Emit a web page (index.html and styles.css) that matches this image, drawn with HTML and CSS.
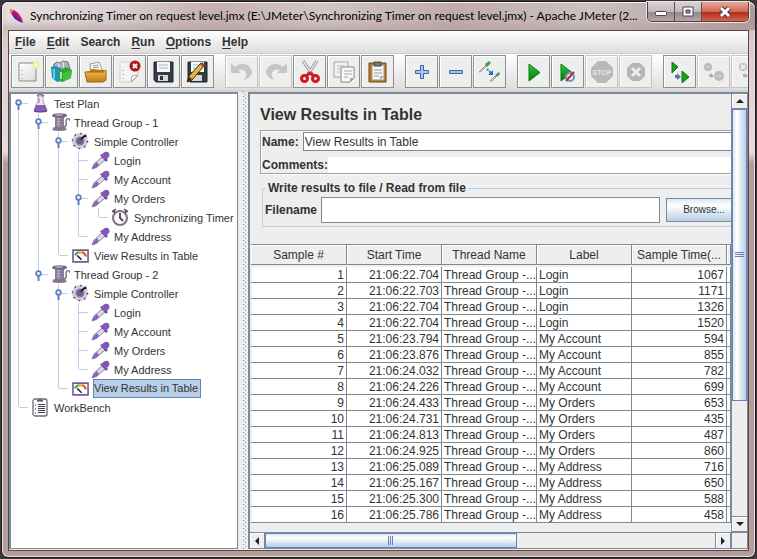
FILE: index.html
```html
<!DOCTYPE html>
<html lang="en">
<head>
<meta charset="utf-8">
<title>Synchronizing Timer on request level.jmx - Apache JMeter</title>
<link rel="stylesheet" href="styles.css">
</head>
<body>
<svg class="defs" aria-hidden="true">
  <defs>
    <linearGradient id="gGreen" x1="0" y1="0" x2="0" y2="1"><stop offset="0" stop-color="#3fc04c"/><stop offset=".5" stop-color="#18a01c"/><stop offset="1" stop-color="#067a0a"/></linearGradient>
    <linearGradient id="gFolder" x1="0" y1="0" x2="0" y2="1"><stop offset="0" stop-color="#f0c050"/><stop offset="1" stop-color="#c07f10"/></linearGradient>
    <linearGradient id="gPaper" x1="0" y1="0" x2="1" y2="1"><stop offset="0" stop-color="#ffffff"/><stop offset="1" stop-color="#dcdcdc"/></linearGradient>
  </defs>
  <symbol id="i-flask" viewBox="0 0 19 19"><path d="M7 2h5v5l4 9q0 2-2 2H5q-2 0-2-2l4-9z" fill="#eceaf0" stroke="#a49eae"/><path d="M5 11h9l2 5q0 2-2 2H5q-2 0-2-2z" fill="#8560b2"/><path d="M6 2l3-2 4 2" stroke="#77717f" stroke-width="1.500" fill="none"/><path d="M8 4v5" stroke="#8b8593"/><path d="M3 17q6 2 13 0" stroke="#5c3c8c" fill="none"/></symbol>
  <symbol id="i-spool" viewBox="0 0 19 19"><path d="M4 3h9v12H4z" fill="#8e809c"/><path d="M6 3h3v12H6z" fill="#b8aec4"/><path d="M4 7h9M4 10h9M4 13h9" stroke="#857894"/><ellipse cx="8.500" cy="2.500" rx="7.500" ry="2.300" fill="#74687f"/><ellipse cx="8" cy="2" rx="4" ry="1" fill="#a9a0b3"/><path d="M3 14h11l2 3q-8 2-15 0z" fill="#83778f"/><path d="M13 14q3-1 2-5q0-4 3-3q1 0 1 2" fill="none" stroke="#83778f" stroke-width="1.500"/></symbol>
  <symbol id="i-dial" viewBox="0 0 19 19"><circle cx="9" cy="9" r="8" fill="#d3cadf"/><circle cx="9" cy="9" r="7.500" fill="none" stroke="#332d39" stroke-width="1.500" stroke-dasharray="1.300 4.590"/><circle cx="9" cy="9" r="4.500" fill="#907fa6"/><circle cx="9" cy="9" r="3" fill="#6b5a83"/><path d="M10 7l5-4" stroke="#17131c" stroke-width="1.800"/></symbol>
  <symbol id="i-dropper" viewBox="0 0 19 19"><path d="M1 18l2-5 8-7 3 3-8 7z" fill="#ded8e8" stroke="#8d829b"/><path d="M1 18l2-4 3-3 2 3-3 3z" fill="#8a63bd"/><path d="M9 4l2-1 6 6-2 2z" fill="#705396"/><path d="M11 4q2-4 6-3q3 3 0 6l-3 2-4-4z" fill="#8258b4"/></symbol>
  <symbol id="i-clock" viewBox="0 0 19 19"><circle cx="9" cy="10" r="7" fill="#fafafa" stroke="#7d7289" stroke-width="2"/><path d="M9 5v5l3 3" fill="none" stroke="#4a4255" stroke-width="1.800"/><path d="M1 4l4-3M17 4l-4-3M2 2l2 3M16 2l-2 3" stroke="#4d4556" stroke-width="1.500"/></symbol>
  <symbol id="i-gauge" viewBox="0 0 16 13"><path d="M1 1h14v11H1z" fill="#fff" stroke="#735d98" stroke-width="1.500"/><path d="M3 6q1-3 4-3" fill="none" stroke="#2fa66a" stroke-width="2"/><path d="M9 3q3 0 4 4" fill="none" stroke="#e0552e" stroke-width="2"/><path d="M6 3.500q2-1 4 0" fill="none" stroke="#eda43a" stroke-width="2"/><path d="M9 10L5 6" stroke="#222" stroke-width="1.500"/></symbol>
  <symbol id="i-bench" viewBox="0 0 19 19"><rect x="2" y="1" width="14" height="17" rx="2" fill="#fafafa" stroke="#73687f" stroke-width="1.300"/><path d="M6 3q3-3 6 0z" fill="#555" stroke="#555"/><path d="M7 6.500h7M7 8.500h7M7 10.500h7M7 12.500h7M7 14.500h7" stroke="#44404a"/><path d="M4 7h1M4 11h1M4 15h1" stroke="#5cc05c" stroke-width="2"/></symbol>
  <symbol id="i-handle" viewBox="0 0 7 11"><path d="M3.500 5v6" stroke="#5b7fc0" stroke-width="2"/><circle cx="3.500" cy="3.500" r="2.300" fill="#fff" stroke="#5b7fc0" stroke-width="1.800"/></symbol>
</svg>

<div class="window">
  <header class="titlebar">
    <svg class="feather" viewBox="0 0 18 18" aria-hidden="true"><path d="M1 1q6 0 10 5q4 5 5 10q-5-1-9-5Q2 7 1 1z" fill="#b3126f"/><path d="M3 5q6 4 12 11q-6-2-9-5z" fill="#4b2a9c"/><path d="M1 1l4 1-2 3z" fill="#e9a23c"/><path d="M7 4q4 3 6 8" stroke="#e2224e" fill="none"/></svg>
    <h1 class="title">Synchronizing Timer on request level.jmx (E:\JMeter\Synchronizing Timer on request level.jmx) - Apache JMeter (2...</h1>
    <div class="controls">
      <button class="ctl" aria-label="Minimize"><svg viewBox="0 0 14 12"><rect x="1.500" y="5.500" width="11" height="4" rx="1" fill="#fff" stroke="#4d4650"/></svg></button>
      <button class="ctl" aria-label="Maximize"><svg viewBox="0 0 14 12"><path d="M2 1h10v9H2z" fill="#fff" stroke="#4d4650"/><path d="M5 4h4v3H5z" fill="#8d8189" stroke="#4d4650"/></svg></button>
      <button class="ctl close" aria-label="Close"><svg viewBox="0 0 14 12"><path d="M3 2l8 8M11 2l-8 8" stroke="#54343a" stroke-width="5"/><path d="M3 2l8 8M11 2l-8 8" stroke="#fff" stroke-width="3"/></svg></button>
    </div>
  </header>

  <div class="client">
    <nav class="menubar">
      <button><u>F</u>ile</button><button><u>E</u>dit</button><button>Search</button><button><u>R</u>un</button><button><u>O</u>ptions</button><button><u>H</u>elp</button>
    </nav>

    <div class="toolbar" role="toolbar">
      <div class="group">
        <button aria-label="New"><svg viewBox="0 0 24 24"><path d="M3 3h17v18H3z" fill="url(#gPaper)" stroke="#8a8a8a"/><path d="M6 10v1M6 14v1M6 18v1" stroke="#888"/><circle cx="20" cy="5" r="3.500" fill="#f8ee9a"/><circle cx="20" cy="5" r="1.500" fill="#fffde0"/></svg></button>
        <button aria-label="Templates"><svg viewBox="0 0 24 24"><path d="M4 4l3-2 3 1 3-2 5 1 2 7H3z" fill="#a9b4b8" stroke="#6b777c"/><path d="M8 3l2 6M13 2l1 7" stroke="#e9eef0"/><path d="M1 7l4-1 6 2v13l-4 1-5-4z" fill="#1697b8"/><path d="M4 9v10" stroke="#8fdcec" stroke-width="1.500"/><path d="M9 11l7-4 6 3-1 8-9 4-3-2z" fill="#2aa52e"/><path d="M13 13l8-3v8l-8 4z" fill="#46c03c"/><path d="M11 12v7" stroke="#d8f5d4" stroke-width="1.500"/></svg></button>
        <button aria-label="Open"><svg viewBox="0 0 24 24"><path d="M6 4l9-2 3 7v6H7z" fill="#f7f7f7" stroke="#999"/><path d="M9 6l5-1M9 8l6-1" stroke="#999"/><path d="M2 12l4-1 1-2 13 1v11H3z" fill="#b97c15"/><path d="M1 12h18l3-2v10l-3 2H3z" fill="url(#gFolder)" stroke="#9b6712"/></svg></button>
        <button aria-label="Close test plan"><svg viewBox="0 0 24 24"><path d="M2 2h18v14l-6 6H2z" fill="#f4f4f4" stroke="#d2d2d2"/><path d="M13 22l1-6 6-1z" fill="#fff" stroke="#aaa"/><path d="M5 10v1M5 14v1M5 18v1" stroke="#888"/><circle cx="17" cy="6" r="5.500" fill="#ad1719"/><path d="M15 4l4 4M19 4l-4 4" stroke="#fff" stroke-width="2"/></svg></button>
        <button aria-label="Save"><svg viewBox="0 0 24 24"><path d="M2 2h19v20H4l-2-2z" fill="#353b43" stroke="#22262b"/><path d="M5 2h13v10H5z" fill="#f3f6fa"/><path d="M7 5h9M7 8h9" stroke="#a4b4c8"/><path d="M6 15h10v6H6z" fill="#d7d7d7"/><path d="M8 16h3v4H8z" fill="#333"/></svg></button>
        <button aria-label="Save as"><svg viewBox="0 0 24 24"><path d="M2 2h19v20H4l-2-2z" fill="#353b43" stroke="#22262b"/><path d="M5 2h13v10H5z" fill="#f3f6fa"/><path d="M7 5h9M7 8h9" stroke="#a4b4c8"/><path d="M6 15h10v6H6z" fill="#d7d7d7"/><path d="M1 22l2-6L15 3l3 3L6 20z" fill="#e6b23a" stroke="#3f3014"/><path d="M1 22l2-5 3 2z" fill="#2a2118"/><path d="M14 4l2-2 3 3-2 2z" fill="#b3342c"/></svg></button>
      </div>
      <div class="group">
        <button disabled aria-label="Undo"><svg viewBox="0 0 24 24"><path d="M1 3v10h10L8 10q6-2 8 3q1 3-2 7q8-3 8-8Q20 3 11 4q-4 1-6 3z" fill="#c6c6c6"/></svg></button>
        <button disabled aria-label="Redo"><svg viewBox="0 0 24 24"><path d="M23 3v10H13l3-3q-6-2-8 3q-1 3 2 7q-8-3-8-8Q4 3 13 4q4 1 6 3z" fill="#c6c6c6"/></svg></button>
        <button aria-label="Cut"><svg viewBox="0 0 24 24"><path d="M5 1l9 13M19 1l-9 13" stroke="#777" stroke-width="3"/><path d="M5 1l9 13M19 1l-9 13" stroke="#e9e9e9" stroke-width="1.500"/><circle cx="6.500" cy="18.500" r="3" fill="none" stroke="#d0191d" stroke-width="3"/><circle cx="17.500" cy="18.500" r="3" fill="none" stroke="#d0191d" stroke-width="3"/><path d="M8 16l4-3 4 3" stroke="#d0191d" stroke-width="3" fill="none"/></svg></button>
        <button aria-label="Copy"><svg viewBox="0 0 24 24"><path d="M2 2h14v15H2z" fill="#f2f2f2" stroke="#a2a2a2"/><path d="M5 6h8M5 9h3M5 12h3" stroke="#bbb"/><path d="M9 7h13v11l-4 4H9z" fill="#f8f8f8" stroke="#888"/><path d="M12 11h8M12 14h8M12 17h4" stroke="#aaa"/><path d="M18 22v-4h4z" fill="#aaa"/></svg></button>
        <button aria-label="Paste"><svg viewBox="0 0 24 24"><path d="M3 3h17v19H3z" fill="#b87923" stroke="#704814"/><path d="M6 5h12v15H6z" fill="#f7f7f7" stroke="#999"/><path d="M8 2h7v4H8z" fill="#777" stroke="#444"/><path d="M8 10h8M8 13h8M8 16h5" stroke="#999"/><path d="M14 20v-4h4z" fill="#aaa"/></svg></button>
      </div>
      <div class="group">
        <button aria-label="Expand all"><svg viewBox="0 0 24 24"><path d="M10.500 5.500h3v5h5v3h-5v5h-3v-5h-5v-3h5z" fill="#a8c4e6" stroke="#3b69a8"/></svg></button>
        <button aria-label="Collapse all"><svg viewBox="0 0 24 24"><path d="M5.500 10.500h13v3h-13z" fill="#a8c4e6" stroke="#3b69a8"/></svg></button>
        <button aria-label="Toggle"><svg viewBox="0 0 24 24"><path d="M1 12l7-7 1 1-7 6z" fill="#e0e4df" stroke="#999"/><path d="M7 4l4-3 2 2-4 4z" fill="#459c45"/><path d="M12 21l5-5 1 1-4 4z" fill="#ddd" stroke="#999"/><path d="M17 15l4-3 1 2-3 3z" fill="#459c45"/><path d="M9 9l4 4" stroke="#297ac8" stroke-width="2" stroke-dasharray="2 1"/><path d="M15 10v5h-5z" fill="#1e6ec6"/></svg></button>
      </div>
      <div class="group">
        <button aria-label="Start"><svg viewBox="0 0 24 24"><path d="M7 4l11 8.500L7 21z" fill="url(#gGreen)" stroke="#0a7a12"/></svg></button>
        <button aria-label="Start no pauses"><svg viewBox="0 0 24 24"><path d="M5 4l11 8.500L5 21z" fill="url(#gGreen)" stroke="#0a7a12"/><circle cx="14" cy="17" r="4" fill="#e8eef8" stroke="#6d93c6" stroke-width="2"/><path d="M10 21l8-9" stroke="#c3262b" stroke-width="2"/></svg></button>
        <button disabled aria-label="Stop"><svg viewBox="0 0 24 24"><path d="M8 1h8l7 7v8l-7 7H8l-7-7V8z" fill="#b9b9b9"/><text x="12" y="15" text-anchor="middle" class="stop">STOP</text></svg></button>
        <button disabled aria-label="Shutdown"><svg viewBox="0 0 24 24"><path d="M8 3h8l5 5v8l-5 5H8l-5-5V8z" fill="#b5b5b5"/><path d="M8 8l8 8M16 8l-8 8" stroke="#eee" stroke-width="3"/></svg></button>
      </div>
      <div class="group">
        <button aria-label="Remote start"><svg viewBox="0 0 24 24"><path d="M4 2l6 5-6 6zM14 11l7 6-7 6z" fill="#18a01c" stroke="#0a7a12"/><path d="M7 15h2v-2l4 4-4 3v-2H7z" fill="#5878a8"/></svg></button>
        <button disabled aria-label="Remote stop"><svg viewBox="0 0 24 24"><circle cx="6" cy="7" r="4" fill="#bcbcbc"/><circle cx="17" cy="16" r="5" fill="#bcbcbc"/><path d="M4 7h4M14 16h6" stroke="#ddd"/><path d="M7 14h2v-1l3 3-3 2v-1H7z" fill="#b0b0b0"/></svg></button>
        <button disabled aria-label="Remote shutdown"><svg viewBox="0 0 24 24"><circle cx="7" cy="7" r="4" fill="#bcbcbc"/><circle cx="18" cy="16" r="5" fill="#bcbcbc"/><path d="M5 5l4 4M9 5l-4 4" stroke="#eee" stroke-width="2"/><path d="M7 14h2v-1l3 3-3 2v-1H7z" fill="#b0b0b0"/></svg></button>
      </div>
    </div>

    <main class="split">
      <section class="treepane">
        <ul class="tree">
          <li class="open"><span class="node"><svg class="ic"><use href="#i-flask"/></svg>Test Plan</span><svg class="knob"><use href="#i-handle"/></svg>
            <ul>
              <li class="open"><span class="node"><svg class="ic"><use href="#i-spool"/></svg>Thread Group - 1</span><svg class="knob"><use href="#i-handle"/></svg>
                <ul>
                  <li class="open"><span class="node"><svg class="ic"><use href="#i-dial"/></svg>Simple Controller</span><svg class="knob"><use href="#i-handle"/></svg>
                    <ul>
                      <li><span class="node"><svg class="ic"><use href="#i-dropper"/></svg>Login</span></li>
                      <li><span class="node"><svg class="ic"><use href="#i-dropper"/></svg>My Account</span></li>
                      <li class="open"><span class="node"><svg class="ic"><use href="#i-dropper"/></svg>My Orders</span><svg class="knob"><use href="#i-handle"/></svg>
                        <ul><li><span class="node"><svg class="ic"><use href="#i-clock"/></svg>Synchronizing Timer</span></li></ul>
                      </li>
                      <li><span class="node"><svg class="ic"><use href="#i-dropper"/></svg>My Address</span></li>
                    </ul>
                  </li>
                  <li><span class="node"><svg class="ic gauge"><use href="#i-gauge"/></svg>View Results in Table</span></li>
                </ul>
              </li>
              <li class="open"><span class="node"><svg class="ic"><use href="#i-spool"/></svg>Thread Group - 2</span><svg class="knob"><use href="#i-handle"/></svg>
                <ul>
                  <li class="open"><span class="node"><svg class="ic"><use href="#i-dial"/></svg>Simple Controller</span><svg class="knob"><use href="#i-handle"/></svg>
                    <ul>
                      <li><span class="node"><svg class="ic"><use href="#i-dropper"/></svg>Login</span></li>
                      <li><span class="node"><svg class="ic"><use href="#i-dropper"/></svg>My Account</span></li>
                      <li><span class="node"><svg class="ic"><use href="#i-dropper"/></svg>My Orders</span></li>
                      <li><span class="node"><svg class="ic"><use href="#i-dropper"/></svg>My Address</span></li>
                    </ul>
                  </li>
                  <li><span class="node"><svg class="ic gauge"><use href="#i-gauge"/></svg><span class="selected">View Results in Table</span></span></li>
                </ul>
              </li>
            </ul>
          </li>
          <li><span class="node"><svg class="ic"><use href="#i-bench"/></svg>WorkBench</span></li>
        </ul>
      </section>
      <div class="divider"></div>
      <section class="detail">
        <div class="view">
          <h2>View Results in Table</h2>
          <div class="identity">
            <div class="field"><label for="name">Name:</label><input id="name" type="text" value="View Results in Table"></div>
            <div class="field comments"><label for="comments">Comments:</label><input id="comments" type="text"></div>
          </div>
          <fieldset class="file">
            <legend>Write results to file / Read from file</legend>
            <label for="filename">Filename</label><input id="filename" type="text"><button class="browse">Browse...</button>
          </fieldset>
          <table class="results">
            <thead><tr><th>Sample #</th><th>Start Time</th><th>Thread Name</th><th>Label</th><th>Sample Time(...</th><th></th></tr></thead>
            <tbody>
              <tr><td>1</td><td>21:06:22.704</td><td>Thread Group -...</td><td>Login</td><td>1067</td><td></td></tr>
              <tr><td>2</td><td>21:06:22.703</td><td>Thread Group -...</td><td>Login</td><td>1171</td><td></td></tr>
              <tr><td>3</td><td>21:06:22.704</td><td>Thread Group -...</td><td>Login</td><td>1326</td><td></td></tr>
              <tr><td>4</td><td>21:06:22.704</td><td>Thread Group -...</td><td>Login</td><td>1520</td><td></td></tr>
              <tr><td>5</td><td>21:06:23.794</td><td>Thread Group -...</td><td>My Account</td><td>594</td><td></td></tr>
              <tr><td>6</td><td>21:06:23.876</td><td>Thread Group -...</td><td>My Account</td><td>855</td><td></td></tr>
              <tr><td>7</td><td>21:06:24.032</td><td>Thread Group -...</td><td>My Account</td><td>782</td><td></td></tr>
              <tr><td>8</td><td>21:06:24.226</td><td>Thread Group -...</td><td>My Account</td><td>699</td><td></td></tr>
              <tr><td>9</td><td>21:06:24.433</td><td>Thread Group -...</td><td>My Orders</td><td>653</td><td></td></tr>
              <tr><td>10</td><td>21:06:24.731</td><td>Thread Group -...</td><td>My Orders</td><td>435</td><td></td></tr>
              <tr><td>11</td><td>21:06:24.813</td><td>Thread Group -...</td><td>My Orders</td><td>487</td><td></td></tr>
              <tr><td>12</td><td>21:06:24.925</td><td>Thread Group -...</td><td>My Orders</td><td>860</td><td></td></tr>
              <tr><td>13</td><td>21:06:25.089</td><td>Thread Group -...</td><td>My Address</td><td>716</td><td></td></tr>
              <tr><td>14</td><td>21:06:25.167</td><td>Thread Group -...</td><td>My Address</td><td>650</td><td></td></tr>
              <tr><td>15</td><td>21:06:25.300</td><td>Thread Group -...</td><td>My Address</td><td>588</td><td></td></tr>
              <tr><td>16</td><td>21:06:25.786</td><td>Thread Group -...</td><td>My Address</td><td>458</td><td></td></tr>
            </tbody>
          </table>
        </div>
        <div class="vbar">
          <button aria-label="Scroll up"><svg viewBox="0 0 10 6"><path d="M1 5l4-4 4 4z" fill="#222"/></svg></button>
          <div class="thumb"><i></i></div><div class="rest"></div>
          <button aria-label="Scroll down"><svg viewBox="0 0 10 6"><path d="M1 1l4 4 4-4z" fill="#222"/></svg></button>
        </div>
        <div class="hbar">
          <button aria-label="Scroll left"><svg viewBox="0 0 6 10"><path d="M5 1L1 5l4 4z" fill="#222"/></svg></button>
          <div class="thumb"><i></i></div><div class="rest"></div>
          <button aria-label="Scroll right"><svg viewBox="0 0 6 10"><path d="M1 1l4 4-4 4z" fill="#222"/></svg></button>
        </div>
        <div class="corner"></div>
      </section>
    </main>
  </div>
</div>
</body>
</html>
```

FILE: styles.css
```css
* { box-sizing: border-box; }
:root { --line: #7a8a99; --blue: #b8cfe5; --focus: #6382bf; --face: #eeeeee; --ink: #333333; }
html, body { height: 100%; }
body { margin: 0; padding: 1px; background: #3c3a3b; overflow: hidden; color: var(--ink); font: 12px/16px "Liberation Sans", sans-serif; }
button, input { font: inherit; color: inherit; margin: 0; padding: 0; border: 0; border-radius: 0; background: none; }
.defs { position: absolute; width: 0; height: 0; }

.window { height: 100%; display: flex; flex-direction: column; padding: 0 6px 6px; border: 1px solid #1d1a1b; border-radius: 7px; background: linear-gradient(#bda6a4, #dccbca 40px, #ead9d8 150px, #b59c98 161px, #b79d99); box-shadow: inset 0 0 0 1px #e9dfde; }
.titlebar { display: flex; align-items: flex-start; height: 28px; flex: none; margin: 0 -6px; padding-left: 7px; border-radius: 7px 7px 0 0; background: linear-gradient(90deg, #e8dfe0, #d9cfd0 15%, #c5b1b1 28%, #d2c6c6 42%, #c0acac 60%, #cdc1c1 78%, #b09898); box-shadow: inset 0 1px 0 #f4eeee, inset 1px 0 0 #f4eeee, inset 0 -6px 6px #b49d9b88; }
.feather { width: 16px; height: 17px; margin: 6px 5px 0 0; flex: none; }
.title { flex: 1; min-width: 0; margin: 6px 0 0; overflow: hidden; white-space: nowrap; font: 12px/16px Lato, sans-serif; color: #000; }
.controls { display: flex; flex: none; height: 20px; margin-right: 6px; border: 1px solid #4c4145; border-top: 0; border-radius: 0 0 5px 5px; box-shadow: 0 0 0 1px #eee3e4; overflow: hidden; }
.ctl { width: 27px; display: grid; place-items: center; border-right: 1px solid #5c5054; background: linear-gradient(#dcd3d5, #c4b8bb 50%, #95868b 52%, #b4a5a9); }
.ctl svg { width: 14px; height: 12px; }
.close { width: 46px; border-right: 0; background: linear-gradient(#e5a79c, #d36a56 50%, #b02a14 52%, #d1664c); }

.client { flex: 1; min-height: 0; display: flex; flex-direction: column; border: 1px solid #54484a; background: var(--face); }
.menubar { display: flex; gap: 11px; height: 23px; flex: none; padding: 0 6px; background: linear-gradient(#fff, #dedede); border-bottom: 1px solid #ccc; font-weight: bold; }
.menubar u { text-underline-offset: 2px; }
.toolbar { display: flex; gap: 11px; height: 38px; flex: none; padding: 1px 0 0 2px; overflow: hidden; background: linear-gradient(#fff, #dedede); border-bottom: 2px solid #d4d4d4; }
.group { display: flex; gap: 1px; flex: none; }
.toolbar button { width: 33px; height: 33px; display: grid; place-items: center; border: 1px solid #8f8f8f; background: var(--face); box-shadow: inset 1px 1px 0 #fff; }
.toolbar button:disabled { border-color: #c4c4c4; }
.toolbar svg { width: 24px; height: 24px; }
.stop { font: bold 7px "Liberation Sans", sans-serif; fill: #e6e6e6; }

.split { flex: 1; min-height: 0; display: flex; padding-bottom: 1px; }
.treepane { flex: none; width: 229px; border: 1px solid var(--line); border-width: 2px 1px 1px 2px; background: #fff; overflow: hidden; font-size: 11px; }
.tree, .tree ul { list-style: none; margin: 0; padding: 0; }
.tree { padding: 0 0 0 20px; }
.tree ul { padding-left: 20px; }
.tree li { position: relative; }
.tree li::before { content: ""; position: absolute; left: -13px; top: 0; bottom: 0; border-left: 1px solid var(--blue); }
.tree > li:first-child::before { top: 9px; }
.tree li:last-child::before { bottom: auto; height: 9px; }
.tree li::after { content: ""; position: absolute; left: -12px; top: 9px; width: 9px; border-top: 1px solid var(--blue); }
.node { display: flex; align-items: center; height: 19px; white-space: nowrap; }
.ic { width: 19px; height: 19px; margin-right: 4px; flex: none; overflow: visible; }
.gauge { height: 14px; }
.knob { position: absolute; left: -16px; top: 5px; width: 7px; height: 11px; z-index: 1; }
.selected { height: 19px; line-height: 17px; margin-left: -1px; padding-right: 2px; border: 1px solid var(--focus); background: var(--blue); }
.divider { flex: none; width: 10px; background: repeating-linear-gradient(#8a95a0 0 1px, transparent 1px 4px) 5px 0 / 1px 100% no-repeat, repeating-linear-gradient(transparent 0 2px, #8a95a0 2px 3px, transparent 3px 4px) 7px 0 / 1px 100% no-repeat, var(--face); }

.detail { flex: 1; min-width: 0; display: grid; grid-template: minmax(0, 1fr) 16px / minmax(0, 1fr) 16px; border: 1px solid var(--line); border-width: 2px 1px 1px 2px; }
.view { overflow: hidden; white-space: nowrap; }
h2 { margin: 0 0 4px 10px; padding-top: 10px; font-size: 16px; line-height: 22px; }
.identity { margin-left: 10px; height: 44px; border: 1px solid #a0a0a0; border-right: 0; padding: 1px 0 0 1px; box-shadow: inset 1px 1px 0 #fff, 0 1px 0 #fff; }
.field { display: flex; align-items: center; gap: 4px; height: 19px; }
label, legend { font-weight: bold; }
.field input { flex: 1; min-width: 0; height: 19px; padding: 0 1px; border: 1px solid var(--line); border-right: 0; background: #fff; }
.comments { height: 16px; margin-top: 6px; gap: 0; }
.comments input { height: 16px; border: 0; }
.file { display: flex; align-items: center; margin: 6px 0 17px 12px; min-width: 0; padding: 0 0 3px 2px; border: 1px solid var(--blue); border-right: 0; }
.file legend { margin-left: 1px; padding: 0 2px; line-height: 16px; }
.file input { flex: 1; min-width: 0; height: 26px; margin: 1px 6px 0 4px; border: 1px solid var(--line); background: #fff; }
.browse { width: 65px; height: 24px; padding-left: 10px; border: 1px solid var(--line); border-right: 0; background: linear-gradient(#dde8f3, #fff 30%, #b8cfe5); font: 10px/16px "Liberation Sans", sans-serif; }

.results { width: calc(100% - 1px); margin-left: 1px; table-layout: fixed; border-collapse: separate; border-spacing: 0; }
.results th { height: 21px; padding: 0; border: 1px solid var(--line); border-left: 0; font-weight: normal; box-shadow: inset 1px 1px 0 #fff; }
.results th:not(:last-child) { width: 95px; }
.results th:first-child { width: 96px; }
.results tbody::before { content: ""; display: table-row; height: 2px; }
.results td { height: 16px; padding: 2px 2px 0; border: 1px solid var(--line); border-width: 0 1px 1px 0; background: #fff; line-height: 13px; }
.results td:first-child { box-shadow: inset 1px 0 0 var(--face); }
.results td:nth-child(-n+2), .results td:nth-child(5) { text-align: right; }

.vbar, .hbar { display: flex; background: var(--face); }
.vbar { flex-direction: column; border-left: 1px solid var(--line); }
.hbar { border-top: 1px solid var(--line); }
.vbar button, .hbar button { flex: none; display: grid; place-items: center; box-shadow: inset 1px 1px 0 #fff; }
.vbar button { height: 15px; border-bottom: 1px solid var(--line); }
.hbar button { width: 15px; border-right: 1px solid var(--line); }
.vbar button svg { width: 10px; height: 6px; }
.hbar button svg { width: 6px; height: 10px; }
.thumb { display: grid; place-items: center; border: 1px solid var(--focus); }
.vbar .thumb { flex: 291; background: linear-gradient(90deg, #dde8f3, #fff 30%, #b8cfe5); }
.vbar .rest { flex: 116; border-bottom: 1px solid var(--line); }
.hbar .thumb { flex: 251; background: linear-gradient(#dde8f3, #fff 30%, #b8cfe5); }
.hbar .rest { flex: 199; border-right: 1px solid var(--line); }
.thumb i { width: 9px; height: 5px; background: repeating-linear-gradient(var(--focus) 0 1px, transparent 1px 2px); }
.hbar .thumb i { width: 5px; height: 9px; background: repeating-linear-gradient(90deg, var(--focus) 0 1px, transparent 1px 2px); }
.corner { border: 1px solid var(--line); border-width: 1px 0 0 1px; }
```
